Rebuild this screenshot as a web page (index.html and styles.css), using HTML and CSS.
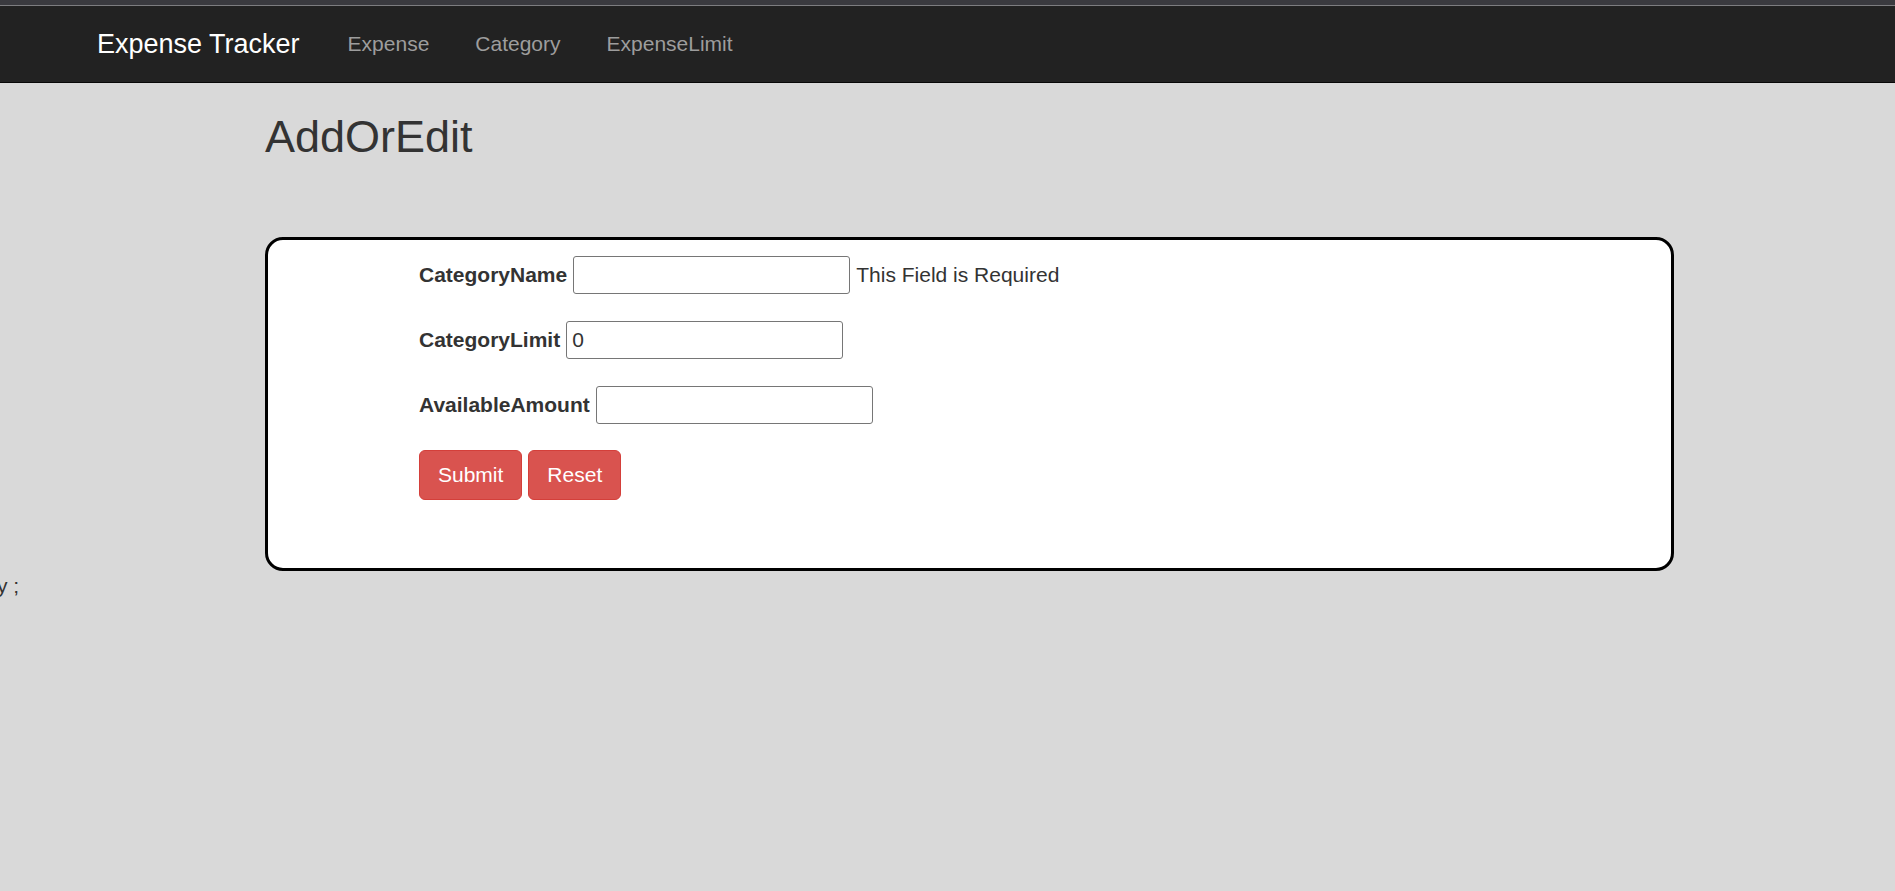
FILE: index.html
```html
<!DOCTYPE html>
<html lang="en">
<head>
<meta charset="UTF-8" />
<title>AddOrEdit - Expense Tracker</title>
<link rel="stylesheet" href="styles.css">
</head>
<body>

<div class="topbar"></div>
<nav class="navbar">
  <a class="brand" href="#">Expense Tracker</a>
  <a class="nav-link" href="#">Expense</a>
  <a class="nav-link" href="#">Category</a>
  <a class="nav-link" href="#">ExpenseLimit</a>
</nav>

<div class="container">
  <h2>AddOrEdit</h2>

  <form class="form-box">
    <div class="form-row">
      <label for="name">CategoryName</label>
      <input type="text" id="name">
      <span class="error">This Field is Required</span>
    </div>
    <div class="form-row">
      <label for="limit">CategoryLimit</label>
      <input type="text" id="limit" value="0">
    </div>
    <div class="form-row">
      <label for="amount">AvailableAmount</label>
      <input type="text" id="amount">
    </div>
    <div class="buttons">
      <button type="submit" class="btn">Submit</button>
      <button type="reset" class="btn">Reset</button>
    </div>
  </form>
</div>

<div class="stray">y ;</div>

</body>
</html>
```

FILE: styles.css
```css
body {
  margin: 0;
  font-family: "Liberation Sans", Arial, sans-serif;
  font-size: 21px;
  line-height: 30px;
  color: #333;
  background: #d9d9d9;
}
.topbar {
  height: 5px;
  background: #3a3a3f;
  border-bottom: 1px solid #7d7d80;
}
.navbar {
  display: flex;
  align-items: center;
  height: 76px;
  padding-left: 97px;
  background: #222;
  border-bottom: 1px solid #080808;
}
.navbar a {
  text-decoration: none;
}
.brand {
  color: #fff;
  font-size: 27px;
  margin-right: 25px;
}
.nav-link {
  color: #9d9d9d;
  padding: 0 23px;
}
.container {
  padding-left: 265px;
}
h2 {
  margin: 29px 0 0;
  font-size: 45px;
  font-weight: 500;
  line-height: 1.1;
}
.form-box {
  box-sizing: border-box;
  width: 1409px;
  height: 334px;
  margin-top: 75px;
  padding: 16px 0 0 151px;
  background: #fff;
  border: 3px solid #000;
  border-radius: 18px;
}
.form-row {
  display: flex;
  align-items: center;
  gap: 6px;
  margin-bottom: 27px;
}
label {
  font-weight: bold;
}
input[type="text"] {
  width: 277px;
  height: 38px;
  box-sizing: border-box;
  padding: 0 5px;
  border: 1px solid #767676;
  border-radius: 3px;
  font-family: inherit;
  font-size: 21px;
  color: #333;
}
.buttons {
  display: flex;
  gap: 6px;
  margin-top: -1px;
}
.btn {
  background-color: #d9534f;
  border: 1px solid #d43f3a;
  color: #fff;
  font-family: inherit;
  font-size: 21px;
  line-height: 30px;
  padding: 9px 18px;
  border-radius: 6px;
  cursor: pointer;
}
.stray {
  text-indent: -3px;
  white-space: nowrap;
}
```
